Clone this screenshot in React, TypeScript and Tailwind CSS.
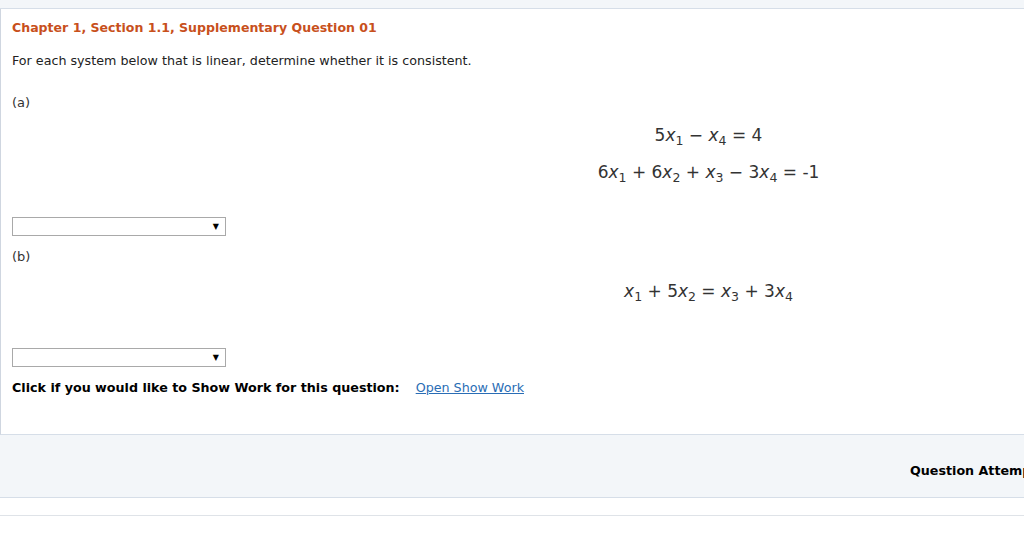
import React from 'react'

const font = { fontFamily: '"DejaVu Sans", Verdana, sans-serif' }

function X({ n }: { n: number }) {
  return (
    <span>
      <i>x</i>
      <sub className="text-[12.5px] relative top-[4px] align-baseline">{n}</sub>
    </span>
  )
}

function Dropdown() {
  return (
    <div className="flex items-center justify-end w-[214px] h-[19px] border border-[#a9a9a9] bg-white pr-[6px]">
      <span className="text-[8px] leading-none text-black">▼</span>
    </div>
  )
}

export default function App() {
  return (
    <div className="w-full min-h-[534px] bg-white overflow-hidden text-[#222]" style={font}>
      <div className="h-[9px] bg-[#f3f6f9] border-b border-[#d6dee8]" />

      <div className="border-l border-[#cfd6e0] border-b border-b-[#d6dee8] pl-[11px] pt-[11px] pb-[38px]">
        <h1 className="text-[12.55px] leading-[16px] font-bold text-[#c8501c]">
          Chapter 1, Section 1.1, Supplementary Question 01
        </h1>
        <p className="mt-[17px] text-[12.7px] leading-[16px]">
          For each system below that is linear, determine whether it is consistent.
        </p>

        <div className="mt-[26px] text-[13px] leading-[16px] text-[#333]">(a)</div>
        <div className="mt-[6px] ml-[381px] text-center text-[17px] leading-[37px] text-[#333]">
          <div>
            5<X n={1} /> − <X n={4} /> = 4
          </div>
          <div>
            6<X n={1} /> + 6<X n={2} /> + <X n={3} /> − 3<X n={4} /> = -1
          </div>
        </div>
        <div className="mt-[26px]">
          <Dropdown />
        </div>

        <div className="mt-[13px] text-[13px] leading-[16px] text-[#333]">(b)</div>
        <div className="mt-[8px] ml-[381px] text-center text-[17px] leading-[37px] text-[#333]">
          <div>
            <X n={1} /> + 5<X n={2} /> = <X n={3} /> + 3<X n={4} />
          </div>
        </div>
        <div className="mt-[38px]">
          <Dropdown />
        </div>

        <div className="mt-[13px] flex items-center gap-[16px] text-[12.7px] leading-[16px]">
          <span className="font-bold text-black">Click if you would like to Show Work for this question:</span>
          <a href="#" className="text-[#2a6db5] underline">Open Show Work</a>
        </div>
      </div>

      <div className="h-[63px] bg-[#f3f6f9] border-b border-[#d6dee8] flex items-center pl-[910px] pt-[10px]">
        <span className="text-[12.7px] font-bold text-black whitespace-nowrap">Question Attempts: 0 of 3 used</span>
      </div>
      <div className="h-[18px] border-b border-[#dfe3e8]" />
    </div>
  )
}
